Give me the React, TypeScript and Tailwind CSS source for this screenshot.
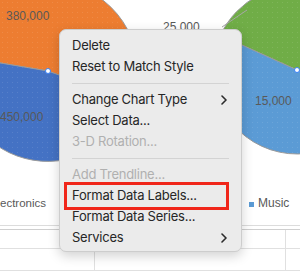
import React from "react";

type Item = {
  label?: string;
  disabled?: boolean;
  sub?: boolean;
  sep?: boolean;
  boxed?: boolean;
};

const items: Item[] = [
  { label: "Delete" },
  { label: "Reset to Match Style" },
  { sep: true },
  { label: "Change Chart Type", sub: true },
  { label: "Select Data..." },
  { label: "3-D Rotation...", disabled: true },
  { sep: true },
  { label: "Add Trendline...", disabled: true },
  { label: "Format Data Labels...", boxed: true },
  { label: "Format Data Series..." },
  { label: "Services", sub: true },
];

const Chevron = () => (
  <svg width="6" height="10" viewBox="0 0 6 10">
    <polyline
      points="1,1 5,5 1,9"
      fill="none"
      stroke="#2b2b2b"
      strokeWidth="1.6"
      strokeLinecap="round"
      strokeLinejoin="round"
    />
  </svg>
);

// pie chart behind the menu
const Chart = () => (
  <svg width="300" height="225" className="block">
    <defs>
      <pattern id="dots" width="5" height="5" patternUnits="userSpaceOnUse">
        <rect x="2" y="2" width="1" height="1" fill="#ffffff" opacity="0.1" />
      </pattern>
    </defs>
    {/* left pie */}
    <path d="M48 71 L-40.8 56.1 A90 90 0 1 1 132.6 101.8 Z" fill="#ed7d31" stroke="#9a9a9a" strokeWidth="1" />
    <path d="M48 71 L132.6 101.8 A90 90 0 0 1 -40.8 56.1 Z" fill="#4472c4" stroke="#9a9a9a" strokeWidth="1" />
    <circle cx="48" cy="71" r="90" fill="url(#dots)" />
    {/* right pie */}
    <path d="M297 70 L220.5 35.3 A84 84 0 0 1 381 70 Z" fill="#70ad47" stroke="#9a9a9a" strokeWidth="1" />
    <path d="M297 70 L381 70 A84 84 0 1 1 220.5 35.3 Z" fill="#5b9bd5" stroke="#9a9a9a" strokeWidth="1" />
    <circle cx="297" cy="70" r="84" fill="url(#dots)" />
    <line x1="222" y1="27" x2="247" y2="10" stroke="#a6a6a6" strokeWidth="1" />
    <circle cx="48" cy="71" r="2.5" fill="#fff" stroke="#3b82f6" strokeWidth="1" />
    <circle cx="297" cy="70" r="2.5" fill="#fff" stroke="#3b82f6" strokeWidth="1" />
    <g fontFamily="'Liberation Sans', Arial, sans-serif" fontSize="12" fill="#595959">
      <text x="6" y="20">380,000</text>
      <text x="0" y="121">450,000</text>
      <text x="255" y="105">15,000</text>
      <text x="163" y="31">25,000</text>
      <text x="0" y="207" fontSize="11.5">ectronics</text>
      <text x="258" y="207">Music</text>
    </g>
    <rect x="249" y="202" width="5" height="5" fill="#5b9bd5" />
  </svg>
);

export default function App() {
  return (
    <div className="relative w-[300px] h-[273px] overflow-hidden bg-white">
      <Chart />
      <div className="border-t border-[#dcdcdc] mt-0 pt-[3px]">
        <div className="border-t border-[#cfcfcf]">
          <div className="flex h-[19px] border-b border-[#e0e0e0]">
            <div className="w-[95px] border-r border-[#e0e0e0]" />
            <div className="w-[191px] border-r border-[#e0e0e0]" />
          </div>
          <div className="flex h-[22px] border-b border-[#e0e0e0]">
            <div className="w-[95px] border-r border-[#e0e0e0]" />
            <div className="w-[191px] border-r border-[#e0e0e0]" />
          </div>
        </div>
      </div>

      <div
        className="absolute left-[59px] top-[29px] w-[183px] h-[223px] py-[5px] rounded-[7px] bg-[#ebebeb] border border-[#cdcdcd] shadow-[0_4px_12px_rgba(0,0,0,0.18)]"
        style={{ fontFamily: "Inter, 'Liberation Sans', sans-serif" }}
      >
        {items.map((it, i) =>
          it.sep ? (
            <div key={i} className="h-[12px] flex items-center mx-[12px]">
              <div className="w-full border-t border-[#d3d3d3]" />
            </div>
          ) : (
            <div
              key={i}
              className={`relative h-[21px] flex items-center justify-between pl-[12px] pr-[14px] text-[13px] tracking-[-0.25px] ${
                it.disabled ? "text-[#b0b0b0]" : "text-[#262626]"
              }`}
            >
              <span>{it.label}</span>
              {it.sub && <Chevron />}
              {it.boxed && (
                <div className="absolute left-[4px] top-[-3px] w-[165px] h-[28px] border-[3px] border-[#f0261a]" />
              )}
            </div>
          )
        )}
      </div>
    </div>
  );
}
